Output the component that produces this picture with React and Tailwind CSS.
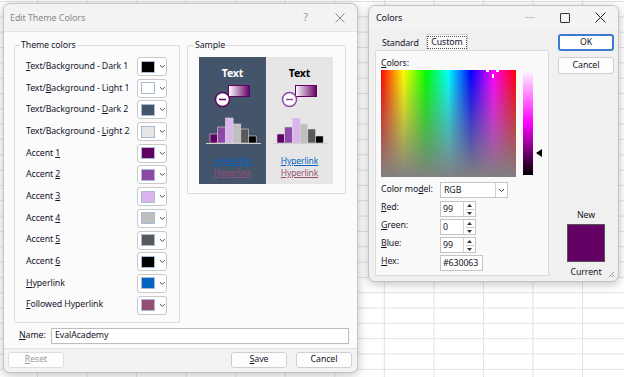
const FONT = "font-['Noto_Sans',sans-serif] tracking-[-0.1px]";

const THEME = [
  { pre: "", u: "T", post: "ext/Background - Dark 1", sw: "bg-[#000000]" },
  { pre: "Text/", u: "B", post: "ackground - Light 1", sw: "bg-[#ffffff]" },
  { pre: "Text/Background - ", u: "D", post: "ark 2", sw: "bg-[#44546a]" },
  { pre: "Text/Background - ", u: "L", post: "ight 2", sw: "bg-[#e7e6e6]" },
  { pre: "Accent ", u: "1", post: "", sw: "bg-[#630063]" },
  { pre: "Accent ", u: "2", post: "", sw: "bg-[#8c4aa6]" },
  { pre: "Accent ", u: "3", post: "", sw: "bg-[#dab4ec]" },
  { pre: "Accent ", u: "4", post: "", sw: "bg-[#bfbfbf]" },
  { pre: "Accent ", u: "5", post: "", sw: "bg-[#595959]" },
  { pre: "Accent ", u: "6", post: "", sw: "bg-[#000000]" },
  { pre: "", u: "H", post: "yperlink", sw: "bg-[#0563c1]" },
  { pre: "", u: "F", post: "ollowed Hyperlink", sw: "bg-[#954f72]" },
];

const BARS = [
  { x: 10, top: 51, fill: "#630063" },
  { x: 17.7, top: 44, fill: "#8c4aa6" },
  { x: 25.4, top: 35, fill: "#dab4ec" },
  { x: 33.1, top: 41, fill: "#bfbfbf" },
  { x: 40.8, top: 46, fill: "#595959" },
  { x: 48.5, top: 53, fill: "#000000" },
];

function Chevron({ className = "" }) {
  return (
    <svg width="7" height="5" viewBox="0 0 7 5" className={className}>
      <polyline points="1,1 3.5,3.5 6,1" fill="none" stroke="#444" strokeWidth="1" />
    </svg>
  );
}

function SwatchButton({ sw }) {
  return (
    <div className="w-[30px] h-[19px] shrink-0 rounded-[3px] border border-[#c9c9c9] bg-white flex items-center pl-[3px] gap-[4px]">
      <div className={`w-[15px] h-[12px] border border-[#a8bad4] ${sw}`} />
      <Chevron />
    </div>
  );
}

function SampleArt({ id, grad, ring }) {
  return (
    <svg width="66" height="62" viewBox="0 0 66 62">
      <defs>
        <linearGradient id={id} x1="0" x2="1" y1="0" y2="0">
          <stop offset="0" stopColor="#ffffff" />
          <stop offset="1" stopColor={grad} />
        </linearGradient>
      </defs>
      <rect x="28.5" y="2.5" width="21" height="11" fill={`url(#${id})`} stroke="#630063" strokeWidth="1" />
      <circle cx="22.5" cy="16.5" r="7" fill="#ffffff" stroke={ring} strokeWidth="1.5" />
      <line x1="19" y1="16.5" x2="26" y2="16.5" stroke={ring} strokeWidth="1.3" />
      {BARS.map((b, i) => (
        <rect key={i} x={b.x} y={b.top} width="7.7" height={60 - b.top} fill={b.fill} stroke="#d9d9d9" strokeWidth="0.6" />
      ))}
      <line x1="6" y1="60.5" x2="61" y2="60.5" stroke="#d0d0d0" strokeWidth="1" />
    </svg>
  );
}

function SamplePanel({ dark }) {
  return (
    <div className={`w-[67px] h-[127px] flex flex-col items-center pt-[10px] ${dark ? "bg-[#44546a]" : "bg-[#e7e6e6]"}`}>
      <div className={`text-[10.5px] leading-[13px] font-bold ${dark ? "text-white" : "text-black"}`}>Text</div>
      <div className="mt-[3px]">
        <SampleArt id={dark ? "gd" : "gl"} grad="#630063" ring={dark ? "#630063" : "#8c4aa6"} />
      </div>
      <div className="mt-[10px] text-[8.5px] leading-[12px] text-[#0563c1] underline">Hyperlink</div>
      <div className="text-[8.5px] leading-[12px] text-[#954f72] underline">Hyperlink</div>
    </div>
  );
}

function Btn({ children, className = "" }) {
  return (
    <div className={`h-[16px] rounded-[3px] border border-[#cfcfcf] bg-[#fdfdfd] flex items-center justify-center ${className}`}>
      {children}
    </div>
  );
}

function EditThemeColors() {
  return (
    <div className={`absolute left-[3px] top-[3px] w-[355px] h-[370px] rounded-[7px] border border-[#c4c4c4] bg-[#f3f3f3] shadow-[0_2px_10px_rgba(0,0,0,0.25)] flex flex-col overflow-hidden ${FONT} text-[8.8px] text-[#14142a]`}>
      {/* title bar */}
      <div className="h-[27px] shrink-0 flex items-center pl-[6px] pr-[12px] text-[#8a8a8a]">
        <span className="text-[9px]">Edit Theme Colors</span>
        <span className="ml-auto mr-[27px] text-[11px] text-[#9a9a9a]">?</span>
        <svg width="10" height="10" viewBox="0 0 10 10">
          <path d="M0.5 0.5 L9.5 9.5 M9.5 0.5 L0.5 9.5" stroke="#8a8a8a" strokeWidth="1" />
        </svg>
      </div>

      {/* body */}
      <div className="h-[318px] shrink-0 bg-[#fbfbfb] border-y border-[#e3e3e3] pl-[10px] pt-[6px] flex flex-col">
        <div className="flex gap-[7px]">
          <fieldset className="min-w-0 w-[166px] h-[285px] border border-[#dcdcdc] rounded-[2px] pl-[11px] pr-[12px] pt-[5px]">
            <legend className="-ml-[6px] px-[1px] leading-[14px]">Theme colors</legend>
            <div className="flex flex-col gap-[2.7px]">
              {THEME.map((r, i) => (
                <div key={i} className="h-[19px] flex items-center justify-between">
                  <span className="whitespace-nowrap">
                    {r.pre}<u>{r.u}</u>{r.post}
                  </span>
                  <SwatchButton sw={r.sw} />
                </div>
              ))}
            </div>
          </fieldset>

          <fieldset className="min-w-0 w-[159px] h-[156px] border border-[#dcdcdc] rounded-[2px] pl-[11px] pt-[5px]">
            <legend className="-ml-[5px] px-[1px] leading-[14px]">Sample</legend>
            <div className="flex">
              <SamplePanel dark />
              <SamplePanel />
            </div>
          </fieldset>
        </div>

        <div className="mt-[5px] flex items-center">
          <span className="ml-[5px] w-[32px]"><u>N</u>ame:</span>
          <div className="w-[298px] h-[16px] border border-[#bdbdbd] bg-white flex items-center pl-[3px]">EvalAcademy</div>
        </div>
      </div>

      {/* footer */}
      <div className="flex items-center pt-[3px] pl-[4px] pr-[5px]">
        <Btn className="w-[56px] text-[#9c9c9c] border-[#dedede]"><u>R</u>eset</Btn>
        <Btn className="w-[56px] ml-auto"><u>S</u>ave</Btn>
        <Btn className="w-[56px] ml-[9px]">Cancel</Btn>
      </div>
    </div>
  );
}

function NumField({ value }) {
  return (
    <div className="w-[36px] h-[16px] border border-[#c4c4c4] bg-white flex">
      <div className="flex-1 pl-[2px] leading-[14px]">{value}</div>
      <div className="w-[12px] border-l border-[#d0d0d0] flex flex-col items-center justify-center gap-[2px]">
        <svg width="5" height="3" viewBox="0 0 5 3"><polygon points="0,3 2.5,0 5,3" fill="#333" /></svg>
        <div className="w-[8px] h-px bg-[#c8c8c8]" />
        <svg width="5" height="3" viewBox="0 0 5 3"><polygon points="0,0 2.5,3 5,0" fill="#333" /></svg>
      </div>
    </div>
  );
}

function ColorsDialog() {
  return (
    <div className={`absolute left-[368px] top-[5px] w-[251px] h-[277px] rounded-[7px] border border-[#c4c4c4] bg-[#f0f0f0] shadow-[0_2px_10px_rgba(0,0,0,0.25)] flex flex-col overflow-hidden ${FONT} text-[8.8px] text-[#14142a]`}>
      {/* title bar */}
      <div className="h-[23px] shrink-0 flex items-center pl-[7px] pr-[12px] bg-[#f3f3f3]">
        <span className="text-[9px]">Colors</span>
        <div className="ml-auto w-[10px] h-px bg-[#c6c6c6] mr-[25px]" />
        <div className="w-[10px] h-[10px] border border-[#333] rounded-[1px] mr-[25px]" />
        <svg width="11" height="11" viewBox="0 0 11 11">
          <path d="M0.5 0.5 L10.5 10.5 M10.5 0.5 L0.5 10.5" stroke="#222" strokeWidth="1" />
        </svg>
      </div>

      <div className="flex pl-[6px] pt-[5px]">
        {/* left: tabs */}
        <div className="w-[174px] flex flex-col">
          <div className="h-[16px] flex items-end">
            <div className="ml-[7px] w-[44px] leading-[14px]">Standard</div>
            <div className="w-[42px] h-[16px] bg-[#f9f9f9] border border-b-0 border-[#d6d6d6] flex items-center justify-center">
              <span className="border border-dotted border-[#555] px-[3px] leading-[11px]">Custom</span>
            </div>
          </div>
          <div className="h-[226px] bg-[#f9f9f9] border border-[#dcdcdc] pl-[5px] pt-[6px]">
            <div className="leading-[12px]"><u>C</u>olors:</div>
            <div className="flex items-start">
              <div className="relative w-[135px] h-[107px] mt-px bg-[linear-gradient(to_bottom,rgba(128,128,128,0),#808080),linear-gradient(to_right,#ff0000,#ffff00,#00ff00,#00ffff,#0000ff,#ff00ff,#ff0000)]">
                <div className="absolute left-[105px] top-0 w-[3px] h-[2px] bg-white" />
                <div className="absolute left-[115px] top-0 w-[3px] h-[2px] bg-white" />
                <div className="absolute left-[111px] top-[4px] w-[2px] h-[4px] bg-white" />
              </div>
              <div className="ml-[7px] mt-[2px] w-[10px] h-[104px] bg-[linear-gradient(to_bottom,#fff4ff,#ff00ff_50%,#000000)]" />
              <svg width="6" height="8" viewBox="0 0 6 8" className="ml-[3px] mt-[80px]">
                <polygon points="0,4 6,0 6,8" fill="#000" />
              </svg>
            </div>

            <div className="mt-[5px] flex items-center">
              <span className="w-[59px] whitespace-nowrap">Color mo<u>d</u>el:</span>
              <div className="w-[68px] h-[16px] border border-[#c4c4c4] bg-white flex">
                <div className="flex-1 pl-[3px] leading-[14px]">RGB</div>
                <div className="w-[12px] border-l border-[#d0d0d0] flex items-center justify-center">
                  <Chevron />
                </div>
              </div>
            </div>

            <div className="mt-[3px] flex flex-col gap-[2px]">
              {[
                { l: "R", r: "ed:", v: "99" },
                { l: "G", r: "reen:", v: "0" },
                { l: "B", r: "lue:", v: "99" },
              ].map((f) => (
                <div key={f.l} className="flex items-start h-[16px]">
                  <span className="w-[59px] leading-[12px]"><u>{f.l}</u>{f.r}</span>
                  <NumField value={f.v} />
                </div>
              ))}
              <div className="flex items-start h-[16px]">
                <span className="w-[59px] leading-[12px]"><u>H</u>ex:</span>
                <div className="w-[43px] h-[16px] border border-[#c4c4c4] bg-white pl-[2px] leading-[14px]">#630063</div>
              </div>
            </div>
          </div>
        </div>

        {/* right column */}
        <div className="ml-[9px] w-[56px] flex flex-col">
          <div className="h-[17px] rounded-[3px] border-2 border-[#3d7bd0] bg-white flex items-center justify-center">OK</div>
          <div className="mt-[6px] h-[17px] rounded-[3px] border border-[#cfcfcf] bg-[#fdfdfd] flex items-center justify-center">Cancel</div>
          <div className="mt-[134px] text-center leading-[14px]">New</div>
          <div className="mt-[2px] ml-[9px] w-[38px] h-[38px] bg-[#630063] border border-[#555]" />
          <div className="mt-[3px] text-center leading-[14px]">Current</div>
        </div>
      </div>
      <svg width="8" height="8" viewBox="0 0 8 8" className="absolute right-[3px] bottom-[3px]">
        <path d="M7 2 L2 7 M7 5 L5 7" stroke="#999" strokeWidth="1" />
      </svg>
    </div>
  );
}

export default function App() {
  return (
    <div className="relative w-[624px] h-[377px] overflow-hidden bg-white bg-[linear-gradient(to_right,#e1e1e1_1px,transparent_1px),linear-gradient(to_bottom,#e1e1e1_1px,transparent_1px)] bg-[size:49.55px_15.33px] bg-[position:37px_1px]">
      <EditThemeColors />
      <ColorsDialog />
    </div>
  );
}
